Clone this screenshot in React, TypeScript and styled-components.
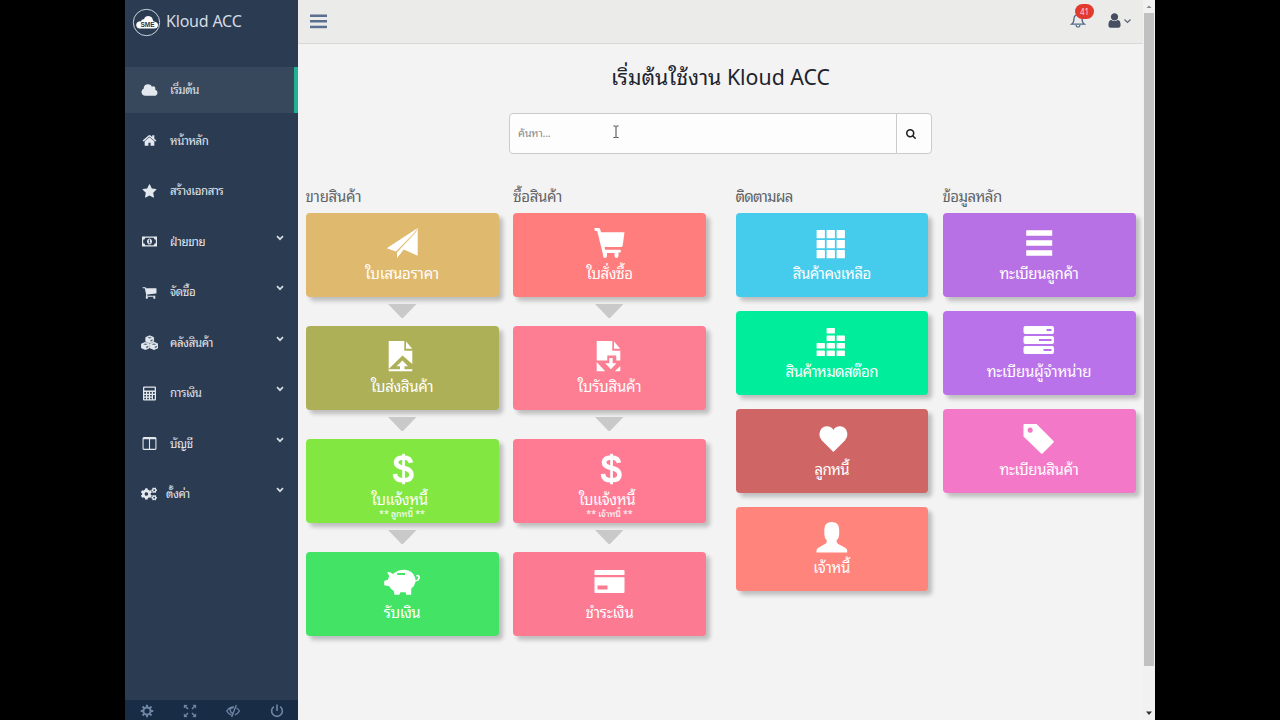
import React from "react";
import styled, { createGlobalStyle } from "styled-components";
import { FaCogs } from "react-icons/fa";

const Global = createGlobalStyle`
  * { box-sizing: border-box; }
  html, body { margin: 0; background: #000; overflow: hidden; }
  body { font-family: "Noto Sans", "Noto Sans Thai Looped", "Loma", "Garuda", "Waree", "Umpush", "Laksaman", sans-serif; }
`;

const Screen = styled.div`
  width: 1280px; height: 720px; padding: 0 125px;
  display: flex; background: #000; overflow: hidden;
`;

const Sidebar = styled.aside`
  width: 173px; height: 720px; background: #2b3b51; color: #e3e8ee;
  display: flex; flex-direction: column; flex: none;
`;
const Brand = styled.div`
  height: 67px; padding: 8px 0 0 7px; display: flex; align-items: flex-start; gap: 5px;
`;
const BrandName = styled.div`
  font: 400 16px/26px "Noto Sans", sans-serif; letter-spacing: -0.2px; color: #d6dce4; white-space: nowrap;
`;
const Nav = styled.nav`
  flex: 1; display: flex; flex-direction: column; gap: 4.55px;
`;
const NavItem = styled.div<{ $active?: boolean; $gap: number }>`
  height: 46px; padding: 0 14px 0 16px; display: flex; align-items: center; gap: ${p => p.$gap}px;
  background: ${p => (p.$active ? "#37485d" : "transparent")};
  border-right: 4px solid ${p => (p.$active ? "#1fb195" : "transparent")};
  svg { flex: none; }
`;
const NavText = styled.span`
  flex: 1; font-size: 11.5px; line-height: 20px; white-space: nowrap; letter-spacing: -0.4px;
`;
const Chevron = styled.svg` margin: -8px -4px 0 0; `;
const Footer = styled.div`
  height: 20px; background: #192c46; padding: 3px 0 0; display: grid; grid-template-columns: repeat(4, 43.3px);
  justify-items: center; color: #6f87a5;
`;

const Content = styled.main`
  width: 845px; background: #f3f3f3; display: flex; flex-direction: column;
`;
const TopBar = styled.header`
  height: 44px; background: #ebebe9; border-bottom: 1px solid #d9d9d9;
  display: flex; align-items: flex-start; justify-content: space-between; padding: 0 11px 0 12px;
`;
const Tools = styled.div` display: flex; padding-top: 12px; align-items: flex-start; `;
const BellBox = styled.div` position: relative; width: 18px; margin-right: 19px; `;
const Badge = styled.span`
  position: absolute; left: 5px; top: -8px; width: 19px; height: 15px; border-radius: 8px; background: #e33a30;
  color: #ffdcd8; font: 8px/15px "Noto Sans", sans-serif; text-align: center;
`;
const Title = styled.h1`
  margin: 17px 0 0; font-weight: 400; font-size: 21.300px; line-height: 32px; color: #1d242d; text-align: center;
  white-space: nowrap;
`;
const Search = styled.div`
  margin: 20px 0 0 211px; width: 423px; height: 41px; display: flex; background: #fdfdfd; border: 1px solid #cbcbcb; border-radius: 4px;
`;
const SearchField = styled.div`
  flex: 1; padding: 9px 0 0 8px; font-size: 11px; line-height: 20px; color: #8a8a8a; display: flex; align-items: flex-start;
  svg { margin-top: 2px; }
`;
const Hint = styled.span` width: 94px; white-space: nowrap; letter-spacing: -0.3px; `;
const SearchButton = styled.div`
  width: 35px; border-left: 1px solid #cbcbcb; display: flex; align-items: center; padding-left: 9px;
`;

const Columns = styled.div`
  display: grid; grid-template-columns: 193px 208px 192.5px 193px; column-gap: 14.5px; padding: 30px 0 0 7.5px;
`;
const Column = styled.section`
  width: 100%; max-width: 193px; display: flex; flex-direction: column;
`;
const Heading = styled.h2<{ $ls: number }>`
  margin: 0; height: 28.5px; font-size: 15px; line-height: 25px; font-weight: 400; color: #5f6266;
  letter-spacing: ${p => p.$ls}px; white-space: nowrap;
`;
const Card = styled.div<{ $bg: string }>`
  height: 84px; border-radius: 4px; background: ${p => p.$bg}; color: #fff; padding-top: 11px;
  box-shadow: 4px 4px 4px rgba(0, 0, 0, 0.22);
  display: flex; flex-direction: column; align-items: center;
  svg { flex: none; }
`;
const CardLabel = styled.div<{ $ls: number; $noted: boolean }>`
  height: 18px; font-size: 15px; line-height: 18px; white-space: nowrap; letter-spacing: ${p => p.$ls}px;
  margin-right: ${p => (p.$noted ? 5 : 0)}px;
`;
const CardNote = styled.div` font-size: 9px; line-height: 12px; white-space: nowrap; letter-spacing: -0.1px; `;
const Arrow = styled.svg` display: block; margin: 7px 0 8.3px 82px; `;
const Spacer = styled.div` height: 14px; `;
const Slot = styled.div` display: flex; flex-direction: column; `;

const Scroll = styled.div`
  width: 12px; height: 720px; background: #f1f1f1; padding: 0 1px; display: flex; flex-direction: column; align-items: center;
`;
const Thumb = styled.div` width: 10px; height: 653px; background: #c1c1c1; margin-bottom: 43px; `;

const fa = (d: string, w = 15, box = "0 0 1792 1792") => (
  <svg width={w} height={15} viewBox={box} fill="currentColor"><path d={d} /></svg>
);

const icons = {
  cloud: fa("M1984 1152q0 159-112.5 271.5t-271.5 112.5h-1088q-185 0-316.5-131.5t-131.5-316.5q0-132 71-241.5t187-163.5q-2-28-2-43 0-212 150-362t362-150q158 0 286.5 88t187.5 230q70-62 166-62 106 0 181 75t75 181q0 75-41 138 129 30 213 134.5t84 239.5z", 17, "0 0 2048 1792"),
  home: fa("M1472 992v480q0 26-19 45t-45 19h-384v-384h-256v384h-384q-26 0-45-19t-19-45v-480q0-1 .5-3t.5-3l575-474 575 474q1 2 1 6zm223-69l-62 74q-8 9-21 11h-3q-13 0-21-7l-692-577-692 577q-12 8-24 7-13-2-21-11l-62-74q-8-10-7-23.5t11-21.5l719-599q32-26 76-26t76 26l244 204v-195q0-14 9-23t23-9h192q14 0 23 9t9 23v408l219 182q10 8 11 21.5t-7 23.5z", 17),
  star: fa("M1728 647q0 22-26 48l-363 354 86 500q1 7 1 20 0 21-10.5 35.5t-30.5 14.5q-19 0-40-12l-449-236-449 236q-22 12-40 12-21 0-31.5-14.5t-10.5-35.5q0-6 2-20l86-500-364-354q-25-27-25-48 0-37 56-46l502-73 225-455q19-41 49-41t49 41l225 455 502 73q56 9 56 46z", 17),
  money: (
    <svg width="17" height="15" viewBox="0 0 17 15" fill="currentColor" fillRule="evenodd">
      <path d="M1 2.5h15v10H1zM4.2 3.8A2 2 0 0 1 2.2 5.700v3.600a2 2 0 0 1 2 2h8.600a2 2 0 0 1 2-2V5.700a2 2 0 0 1-2-1.900z" />
      <path d="M8.500 4.400a2.500 3.100 0 1 0 .01 0zM8.100 5.500h.9v3h.6v.7H7.600v-.7h.6V6.600h-.6V6z" />
    </svg>
  ),
  cart: fa("M704 1536q0 52-38 90t-90 38-90-38-38-90 38-90 90-38 90 38 38 90zm896 0q0 52-38 90t-90 38-90-38-38-90 38-90 90-38 90 38 38 90zm128-1088v512q0 24-16.5 42.5t-40.5 21.5l-1044 122q13 60 13 70 0 16-24 64h920q26 0 45 19t19 45-19 45-45 19h-1024q-26 0-45-19t-19-45q0-11 8-31.5t16-36 21.5-40 15.5-29.5l-177-823h-204q-26 0-45-19t-19-45 19-45 45-19h256q16 0 28.500 6.500t19.500 15.500 13 24.500 8 26 5.500 29.500 4.500 26h1201q26 0 45 19t19 45z", 17),
  cubes: (
    <svg width="17" height="15" viewBox="0 0 17 15" fill="currentColor">
      {[[8.700, 0.800], [4.400, 7.300], [13, 7.300]].map(([x, y]) => (
        <g key={x} transform={`translate(${x} ${y})`}>
          <path d="M0 0l3.900 1.600v4L0 7.300l-3.900-1.700v-4z" stroke="currentColor" strokeWidth=".8" strokeLinejoin="round" />
          <path d="M-2.300 1.900L0 1.100l2.300.8L0 2.800zM.8 4.300v1.600l2.100-.9V3.400z" fill="#2b3b51" opacity=".75" />
        </g>
      ))}
    </svg>
  ),
  calculator: (
    <svg width="17" height="15" viewBox="0 0 17 15" fill="currentColor" fillRule="evenodd">
      <path d="M3 .5h11a1 1 0 0 1 1 1v12a1 1 0 0 1-1 1H3a1 1 0 0 1-1-1v-12a1 1 0 0 1 1-1zM3.300 1.800v2.700h10.400V1.800zM3.300 6v1.700h1.700V6zM6.200 6v1.700h1.700V6zM9.100 6v1.700h1.700V6zM12 6v1.700h1.700V6zM3.300 8.900v1.700h1.700V8.900zM6.200 8.900v1.700h1.700V8.900zM9.100 8.900v1.700h1.700V8.900zM12 8.900v4.300h1.700V8.900zM3.300 11.700v1.500h1.700v-1.500zM6.200 11.700v1.500h1.700v-1.500zM9.100 11.700v1.500h1.700v-1.500z" />
    </svg>
  ),
  columns: fa("M224 1536h608v-1152h-640v1120q0 13 9.500 22.500t22.500 9.500zm1376-32v-1120h-640v1152h608q13 0 22.500-9.500t9.500-22.500zm128-1216v1216q0 66-47 113t-113 47h-1344q-66 0-113-47t-47-113v-1216q0-66 47-113t113-47h1344q66 0 113 47t47 113z", 17),
  cogs: <FaCogs size={16} />,
};

const nav = [
  { icon: icons.cloud, text: "เริ่มต้น", active: true },
  { icon: icons.home, text: "หน้าหลัก" },
  { icon: icons.star, text: "สร้างเอกสาร" },
  { icon: icons.money, text: "ฝ่ายขาย", more: true },
  { icon: icons.cart, text: "จัดซื้อ", more: true },
  { icon: icons.cubes, text: "คลังสินค้า", more: true },
  { icon: icons.calculator, text: "การเงิน", more: true },
  { icon: icons.columns, text: "บัญชี", more: true },
  { icon: icons.cogs, text: "ตั้งค่า", more: true, gap: 9 },
];

const Glyph = ({ children }: { children: React.ReactNode }) => (
  <svg width="44" height="40" viewBox="0 0 44 40" fill="currentColor" fillRule="evenodd">{children}</svg>
);

const plane = <Glyph><path d="M37.700 4L6.700 24.300l9.300 3.200L34.500 8.500zM17 28.500V34l6.800-8.600 13.900 6.300V4L36 8 21 25l-3 3.500L35 8.500z" /></Glyph>;
const trolley = <Glyph><path d="M6.500 4h4.300q1 0 1.300 1l.9 3.300h23.500l-1.800 13.200q-.2 1.500-1.700 1.500H16.500l.7 2.700h14.300q1.500 0 1.500 1.300 0 1.500-1.500 1.500h-1v2.500q0 3-2 3t-2-3V29h-7.500v2q0 3-2 3t-2-3l-.5-2.500L9.200 7H8Q6.500 7 6.500 5.500z" /></Glyph>;
const fileUp = <Glyph><path d="M8.700 4h15.600v9.700h8V27L22.500 18.500 8.700 32zM26 4.500l6.300 7.300H26zM22.500 23.500l5.500 5.700h-3.500v3h7.800v2.100H8.700v-2H20v-3.100h-3.500z" /></Glyph>;
const fileDown = <Glyph><path d="M8.700 4h15.600v9.700h8v9.800h-4V18.500h-9v5H8.700zM26 4.500l6.300 7.300H26zM21.300 21h3.400v5.300h3.800l-5.600 5.900-5.700-5.900h4.100zM8.700 25l8.500 9.300H8.700zM32.300 29v5.300h-5.500z" /></Glyph>;
const Dollar = () => <Glyph><path fill="none" stroke="currentColor" strokeWidth="4.600" d="M31 12.800q-1-5.300-7.600-5.300T16 12q0 3.800 4.800 5.200l5.500 1.500Q31.500 20.300 31.500 25q0 5.300-8 5.300-8.200 0-8.500-6.500" /><path d="M22.200 3.800h2.700v30.500h-2.700z" /></Glyph>;
const pig = <Glyph><g transform="translate(-.3 5.700)"><path d="M7.500 3.500q3-.8 5.500 1.800Q18 1 25 1q8 .5 10.500 8l.3 2.500q2.500-.3 2.800-2.800-.3-1.700-1.600-.7l-.7-1.200q1.600-1.300 3-.5 1.500 1.500.8 3.500-1 3-4 2.800-1.300 5-4.600 7.500V26h-5l-.6-2.500h-5.200L19.500 26h-4.700l-.8-4q-3-1.500-4.500-4.500l-5-1v-4.300l3.600-1.200 1.500-3.500zM17.500 4.200v2.200h7.800V4.200z" /></g></Glyph>;
const bankCard = <Glyph><path transform="translate(0 3)" d="M7.500 4h28q1 0 1 1v4h-30V5q0-1 1-1zM6.500 11.300h30v14.700q0 1-1 1h-28q-1 0-1-1zM9.500 19.500v4h10v-4z" /></Glyph>;
const grid = <Glyph>{[0, 1, 2].map(r => [0, 1, 2].map(c => <rect key={`${r}${c}`} x={6.600 + c * 10} y={6 + r * 10} width="8.300" height="8.300" rx=".6" />))}</Glyph>;
const equalizer = <Glyph>{[[0, 2], [0, 3], [1, 0], [1, 1], [1, 2], [1, 3], [2, 1], [2, 2], [2, 3]].map(([c, r]) => <rect key={`${c}${r}`} x={6.600 + c * 10} y={6 + r * 7.500} width="8.300" height="5.500" rx=".5" />)}</Glyph>;
const heart = <Glyph><path transform="translate(.4 -1.500)" d="M23 33.500L11.500 22Q8.500 18.500 9 15q1-7 7.500-7.200 4.500 0 6.500 3.600 2-3.600 6.500-3.600Q36 8 37 15q.4 3.500-2.500 7z" /></Glyph>;
const person = <Glyph><path d="M21.800 4q7.400 0 7.400 7.500v4.500q0 4-2.500 6.300v1.700q0 1.200 1.500 2l7.500 4q1.500 1 1.500 2.500v2H6.500v-2q0-1.500 1.500-2.500l7-4q1.700-1 1.700-2v-1.700Q14.300 20 14.300 16v-4.500Q14.300 4 21.800 4z" /></Glyph>;
const lines = <Glyph><path d="M9.200 6.200h26v5.600h-26zM9.200 16.200h26v5.600h-26zM9.200 26.200h26v5.600h-26z" /></Glyph>;
const tasks = <Glyph>{[[29.500, 5], [22, 12.500], [26.500, 8]].map(([x, w], i) => <path key={i} d={`M8.500 ${4 + i * 10}h26.500q2 0 2 2v4q0 2-2 2H8.500q-2 0-2-2v-4q0-2 2-2zM${x} ${7 + i * 10}v2h${w}v-2z`} />)}</Glyph>;
const tag = <Glyph><path d="M6.500 5q0-1 1-1H19.500L36.500 21q.7.700 0 1.400L25.500 33.500q-.7.700-1.400 0L6.500 16.500zM13.200 7.600a2.600 2.600 0 1 0 .01 0z" /></Glyph>;

type CardData = { icon: React.ReactNode; label: string; bg: string; ls?: number; note?: string };
type ColumnData = { title: string; ls: number; flow?: boolean; cards: CardData[] };

const columns: ColumnData[] = [
  { title: "ขายสินค้า", ls: -0.25, flow: true, cards: [
    { icon: plane, label: "ใบเสนอราคา", bg: "#dfb96d" },
    { icon: fileUp, label: "ใบส่งสินค้า", bg: "#adb057", ls: -0.35 },
    { icon: <Dollar />, label: "ใบแจ้งหนี้", bg: "#83e742", note: "** ลูกหนี้ **", ls: -0.4 },
    { icon: pig, label: "รับเงิน", bg: "#43e466", ls: -0.4 },
  ] },
  { title: "ซื้อสินค้า", ls: -0.35, flow: true, cards: [
    { icon: trolley, label: "ใบสั่งซื้อ", bg: "#ff7d7c", ls: -0.4 },
    { icon: fileDown, label: "ใบรับสินค้า", bg: "#fd7d93" },
    { icon: <Dollar />, label: "ใบแจ้งหนี้", bg: "#fe7b93", note: "** เจ้าหนี้ **", ls: -0.4 },
    { icon: bankCard, label: "ชำระเงิน", bg: "#fc7b93" },
  ] },
  { title: "ติดตามผล", ls: -0.8, cards: [
    { icon: grid, label: "สินค้าคงเหลือ", bg: "#45cbeb", ls: -0.5 },
    { icon: equalizer, label: "สินค้าหมดสต๊อก", bg: "#00ed9b", ls: -0.6 },
    { icon: heart, label: "ลูกหนี้", bg: "#cf6665", ls: -0.6 },
    { icon: person, label: "เจ้าหนี้", bg: "#ff847b", ls: -0.3 },
  ] },
  { title: "ข้อมูลหลัก", ls: -0.55, cards: [
    { icon: lines, label: "ทะเบียนลูกค้า", bg: "#b871e4", ls: -0.35 },
    { icon: tasks, label: "ทะเบียนผู้จำหน่าย", bg: "#ba72eb", ls: -0.25 },
    { icon: tag, label: "ทะเบียนสินค้า", bg: "#f478c8", ls: -0.35 },
  ] },
];

export default function App() {
  return (
    <Screen>
      <Global />
      <Sidebar>
        <Brand>
          <svg width="29" height="29" viewBox="0 0 29 29">
            <circle cx="14.500" cy="14.500" r="13.200" fill="none" stroke="#c9d3dd" strokeWidth="1" />
            <path d="M7 20.500a3.600 3.600 0 0 1 0-7q1-.3 2 0 .3-2.500 3-2.300Q13 8 16.500 8q4 .3 4.500 4.500l1 1q4 .7 4 3.500 0 3.500-4 3.500z" fill="#fff" />
            <text x="15.500" y="18.800" fontSize="6.500" fontWeight="700" fontFamily="Liberation Sans" textAnchor="middle" fill="#26364a">SME</text>
          </svg>
          <BrandName>Kloud ACC</BrandName>
        </Brand>
        <Nav>
          {nav.map(n => (
            <NavItem key={n.text} $active={n.active} $gap={n.gap ?? 12}>
              {n.icon}
              <NavText>{n.text}</NavText>
              {n.more && (
                <Chevron width="8" height="6" viewBox="0 0 8 6"><path d="M1 1.200l3 3 3-3" fill="none" stroke="#d4dde6" strokeWidth="1.700" /></Chevron>
              )}
            </NavItem>
          ))}
        </Nav>
        <Footer>
          <svg width="14" height="16" viewBox="-7 -8 14 16" stroke="currentColor">
            <circle r="3.600" fill="none" strokeWidth="2" />
            {[0, 45, 90, 135, 180, 225, 270, 315].map(a => <path key={a} d="M0-4v-2.300" strokeWidth="2" transform={`rotate(${a})`} />)}
          </svg>
          <svg width="14" height="16" viewBox="-7 -8 14 16" fill="currentColor" stroke="currentColor" strokeWidth="1.500">
            {[0, 90, 180, 270].map(a => <g key={a} transform={`rotate(${a})`}><path d="M2 -2L5-5" /><path d="M2.700-6H6v3.300z" strokeWidth=".3" /></g>)}
          </svg>
          <svg width="14" height="16" viewBox="-7 -8 14 16" fill="none" stroke="currentColor" strokeWidth="1.300">
            <path d="M-1.500 4.200Q-4.500 3-6.300 0-3.500-4 1-4M3.500-3Q5.500-2 6.400 0 5 2.800 1.800 4M3.300-6L-1.300 6M-2.800-1Q-2.500 2 0 2.400M-3-1.200A2.500 2.500 0 0 1 .5-3" />
          </svg>
          <svg width="14" height="16" viewBox="-7 -8 14 16" fill="none" stroke="currentColor" strokeWidth="1.600">
            <path d="M-3.200-4.400a5.400 5.400 0 1 0 6.400 0M0-6.500V0" />
          </svg>
        </Footer>
      </Sidebar>
      <Content>
        <TopBar>
          <svg width="17" height="30" viewBox="0 0 17 30" fill="#5b7091"><rect y="14.500" width="17" height="2.500" /><rect y="20" width="17" height="2.500" /><rect y="25.700" width="17" height="2.500" /></svg>
          <Tools>
            <BellBox>
              <svg width="16" height="17" viewBox="0 0 16 17" fill="none" stroke="#536a89" strokeWidth="1.300"><path d="M1.500 12.200Q4 10.500 4 6.500 4.200 3 8 2.700q3.800.3 4 3.800 0 4 2.500 5.700zM6 13q.3 2.200 2 2.200T10 13" /></svg>
              <Badge>41</Badge>
            </BellBox>
            <svg width="15" height="17" viewBox="128 0 1536 1792" fill="#444f61"><path d="M1536 1399q0 109-62.500 187t-150.500 78h-854q-88 0-150.500-78t-62.500-187q0-85 8.500-160.500t31.500-152 58.500-131 94-89 134.500-34.500q131 128 313 128t313-128q76 0 134.500 34.500t94 89 58.500 131 31.500 152 8.500 160.500zm-256-887q0 159-112.500 271.500t-271.500 112.500-271.500-112.500-112.500-271.500 112.500-271.500 271.500-112.500 271.500 112.500 112.500 271.500z" /></svg>
            <svg width="10" height="17" viewBox="0 0 10 17" fill="none" stroke="#5a6573" strokeWidth="1.200"><path d="M2.500 7.500l3 3 3-3" /></svg>
          </Tools>
        </TopBar>
        <Title>เริ่มต้นใช้งาน Kloud ACC</Title>
        <Search>
          <SearchField>
            <Hint>ค้นหา...</Hint>
            <svg width="8" height="14" viewBox="0 0 8 14" fill="none" stroke="#444"><path d="M1.500 1h2l.5.500.5-.5h2M4 1.500v10.500M1.500 12.500h2l.5-.5.5.5h2" /></svg>
          </SearchField>
          <SearchButton>
            <svg width="10" height="10" viewBox="64 128 1664 1664" fill="#222"><path d="M1216 832q0-185-131.500-316.500t-316.500-131.500-316.500 131.500-131.500 316.500 131.500 316.500 316.500 131.500 316.500-131.500 131.500-316.500zm512 832q0 52-38 90t-90 38q-54 0-90-38l-343-342q-179 124-399 124-143 0-273.500-55.500t-225-150-150-225-55.500-273.500 55.500-273.500 150-225 225-150 273.500-55.500 273.500 55.500 225 150 150 225 55.500 273.500q0 220-124 399l343 343q37 37 37 90z" /></svg>
          </SearchButton>
        </Search>
        <Columns>
          {columns.map(col => (
            <Column key={col.title}>
              <Heading $ls={col.ls}>{col.title}</Heading>
              {col.cards.map((c, i) => (
                <Slot key={c.label}>
                  {i > 0 && (col.flow
                    ? <Arrow width="29" height="14" viewBox="0 0 29 14"><path d="M0 0h28.500L15.500 13.500q-1.200 1-2.400 0z" fill="#c9c9c9" /></Arrow>
                    : <Spacer />)}
                  <Card $bg={c.bg}>
                    {c.icon}
                    <CardLabel $ls={c.ls ?? -0.2} $noted={!!c.note}>{c.label}</CardLabel>
                    {c.note && <CardNote>{c.note}</CardNote>}
                  </Card>
                </Slot>
              ))}
            </Column>
          ))}
        </Columns>
      </Content>
      <Scroll>
        <svg width="10" height="13" viewBox="0 0 10 13"><path d="M2.500 8L5 5.500 7.500 8z" fill="#888" /></svg>
        <Thumb />
        <svg width="10" height="10" viewBox="0 0 10 10"><path d="M2 2.500h6L5 6z" fill="#333" /></svg>
      </Scroll>
    </Screen>
  );
}
